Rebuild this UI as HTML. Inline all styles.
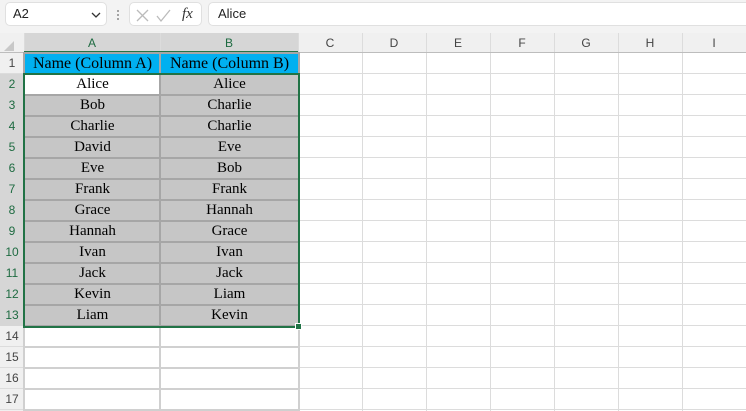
<!DOCTYPE html><html><head><meta charset="utf-8"><style>
body{margin:0;width:746px;height:411px;overflow:hidden;background:#fff;font-family:"Liberation Sans",sans-serif;position:relative}
div{box-sizing:border-box}
.tb{position:absolute;left:0;top:0;width:746px;height:33px;background:#f3f3f3}
.box{position:absolute;top:2px;height:24px;background:#fff;border:1px solid #e0e0e0;border-radius:5px;font-size:13px;line-height:22px;color:#222}
.ch{position:absolute;top:33px;height:20px;font-size:12px;color:#444;text-align:center;line-height:20px}
.rh{position:absolute;left:0;width:24px;height:21px;font-size:12px;color:#444;text-align:center;line-height:21px}
.rh.s{color:#1e6b41;background:#d6d6d6}
.c{position:absolute;height:23px;margin-top:-1px;font-family:"Liberation Serif",serif;font-size:15px;text-align:center;line-height:19px;color:#000;border:2px solid #a6a6a6;background:#c6c6c6;white-space:nowrap}
.a{left:23px;width:139px}.b{left:159px;width:141px}
.hd{background:#00b0f0;font-size:16px}
.e{border-color:#d0d0d0;background:#fff}
.sel{position:absolute;left:23px;top:73px;width:277px;height:255px;border:2px solid #217346}
.hdl{position:absolute;left:295px;top:323px;width:7px;height:7px;background:#217346;border:1px solid #fff}
</style></head><body>
<div class="tb"></div>
<div class="box" style="left:5px;width:102px"><span style="position:absolute;left:7px">A2</span><svg style="position:absolute;left:85px;top:8px" width="10" height="8"><path d="M1 2l4 4 4-4" fill="none" stroke="#333" stroke-width="1.3"/></svg></div>
<div style="position:absolute;left:117px;top:9px;width:2px;height:12px;background:radial-gradient(circle,#888 0.8px,transparent 1px) 0 0/2px 4px"></div>
<div class="box" style="left:129px;width:73px"><svg style="position:absolute;left:5px;top:5px" width="40" height="16"><path d="M2 2l11 11M13 2L2 13" stroke="#bbb" stroke-width="1.3"/><path d="M22 8l4 5 9-11" fill="none" stroke="#bbb" stroke-width="1.3"/></svg><span style="position:absolute;left:52px;font-family:'Liberation Serif',serif;font-style:italic;font-size:15px;color:#333">fx</span></div>
<div class="box" style="left:208px;width:545px"><span style="position:absolute;left:9px">Alice</span></div>
<svg style="position:absolute;left:0;top:33px" width="746" height="378">
<rect x="0" y="0" width="746" height="20" fill="#f0f0f0"/>
<rect x="0" y="20" width="24" height="358" fill="#f0f0f0"/>
<rect x="24" y="0" width="274" height="20" fill="#d6d6d6"/>
<path d="M14 8V18H4Z" fill="#c8c8c8"/>
<g stroke="#dcdcdc" stroke-width="1">
<path d="M24.5 0V378M160.5 0V378M298.5 0V378M362.5 0V378M426.5 0V378M490.5 0V378M554.5 0V378M618.5 0V378M682.5 0V378"/>
<path d="M0 40.5H746M0 61.5H746M0 82.5H746M0 103.5H746M0 124.5H746M0 145.5H746M0 166.5H746M0 187.5H746M0 208.5H746M0 229.5H746M0 250.5H746M0 271.5H746M0 292.5H746M0 313.5H746M0 334.5H746M0 355.5H746M0 376.5H746"/>
</g>
<path d="M0 19.5H746" stroke="#bdbdbd"/>
<path d="M24 19H298" stroke="#217346" stroke-width="2"/>
</svg>
<div class="ch" style="left:24px;width:136px;color:#1e6b41">A</div><div class="ch" style="left:160px;width:138px;color:#1e6b41">B</div>
<div class="ch" style="left:298px;width:64px">C</div><div class="ch" style="left:362px;width:64px">D</div><div class="ch" style="left:426px;width:64px">E</div><div class="ch" style="left:490px;width:64px">F</div><div class="ch" style="left:554px;width:64px">G</div><div class="ch" style="left:618px;width:64px">H</div><div class="ch" style="left:682px;width:64px">I</div>
<div class="rh" style="top:53px">1</div><div class="rh s" style="top:74px">2</div><div class="rh s" style="top:95px">3</div><div class="rh s" style="top:116px">4</div><div class="rh s" style="top:137px">5</div><div class="rh s" style="top:158px">6</div><div class="rh s" style="top:179px">7</div><div class="rh s" style="top:200px">8</div><div class="rh s" style="top:221px">9</div><div class="rh s" style="top:242px">10</div><div class="rh s" style="top:263px">11</div><div class="rh s" style="top:284px">12</div><div class="rh s" style="top:305px">13</div><div class="rh" style="top:326px">14</div><div class="rh" style="top:347px">15</div><div class="rh" style="top:368px">16</div><div class="rh" style="top:389px">17</div>
<div class="c a e" style="top:326px"></div><div class="c b e" style="top:326px"></div>
<div class="c a e" style="top:347px"></div><div class="c b e" style="top:347px"></div>
<div class="c a e" style="top:368px"></div><div class="c b e" style="top:368px"></div>
<div class="c a e" style="top:389px"></div><div class="c b e" style="top:389px"></div>
<div class="c a hd" style="top:53px">Name (Column A)</div><div class="c b hd" style="top:53px">Name (Column B)</div>
<div class="c a" style="top:74px;background:#fff">Alice</div><div class="c b" style="top:74px">Alice</div>
<div class="c a" style="top:95px">Bob</div><div class="c b" style="top:95px">Charlie</div>
<div class="c a" style="top:116px">Charlie</div><div class="c b" style="top:116px">Charlie</div>
<div class="c a" style="top:137px">David</div><div class="c b" style="top:137px">Eve</div>
<div class="c a" style="top:158px">Eve</div><div class="c b" style="top:158px">Bob</div>
<div class="c a" style="top:179px">Frank</div><div class="c b" style="top:179px">Frank</div>
<div class="c a" style="top:200px">Grace</div><div class="c b" style="top:200px">Hannah</div>
<div class="c a" style="top:221px">Hannah</div><div class="c b" style="top:221px">Grace</div>
<div class="c a" style="top:242px">Ivan</div><div class="c b" style="top:242px">Ivan</div>
<div class="c a" style="top:263px">Jack</div><div class="c b" style="top:263px">Jack</div>
<div class="c a" style="top:284px">Kevin</div><div class="c b" style="top:284px">Liam</div>
<div class="c a" style="top:305px">Liam</div><div class="c b" style="top:305px">Kevin</div>
<div class="sel"></div><div class="hdl"></div>
</body></html>
